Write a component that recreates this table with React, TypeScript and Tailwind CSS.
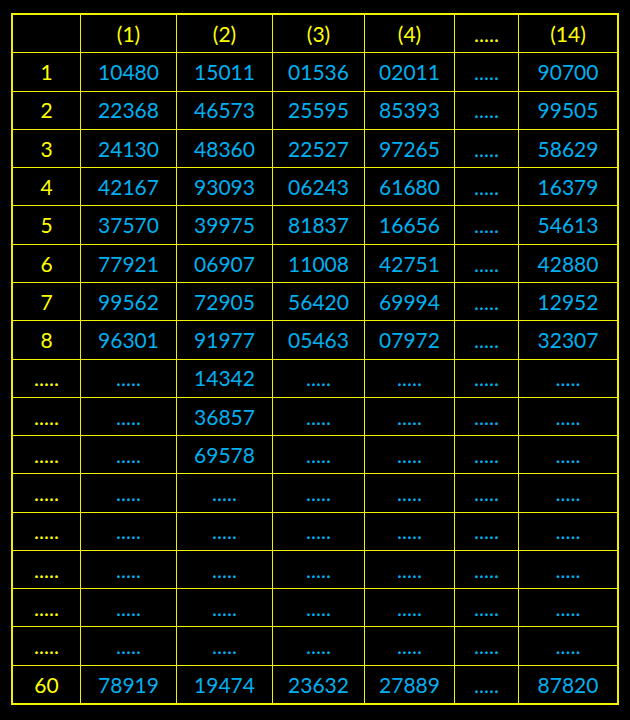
import React from "react";

const header = ["", "(1)", "(2)", "(3)", "(4)", ".....", "(14)"];
const D = ".....";
const rows: string[][] = [
  ["1", "10480", "15011", "01536", "02011", D, "90700"],
  ["2", "22368", "46573", "25595", "85393", D, "99505"],
  ["3", "24130", "48360", "22527", "97265", D, "58629"],
  ["4", "42167", "93093", "06243", "61680", D, "16379"],
  ["5", "37570", "39975", "81837", "16656", D, "54613"],
  ["6", "77921", "06907", "11008", "42751", D, "42880"],
  ["7", "99562", "72905", "56420", "69994", D, "12952"],
  ["8", "96301", "91977", "05463", "07972", D, "32307"],
  [D, D, "14342", D, D, D, D],
  [D, D, "36857", D, D, D, D],
  [D, D, "69578", D, D, D, D],
  [D, D, D, D, D, D, D],
  [D, D, D, D, D, D, D],
  [D, D, D, D, D, D, D],
  [D, D, D, D, D, D, D],
  [D, D, D, D, D, D, D],
  ["60", "78919", "19474", "23632", "27889", D, "87820"],
];

export default function App() {
  return (
    <div
      className="w-[630px] h-[720px] bg-black pl-[11px] pt-[13px]"
      style={{ fontFamily: "Lato, 'Noto Sans', sans-serif" }}
    >
      <div className="w-[608px] h-[692px] border-2 border-[#f0f000] bg-[#f0f000] grid grid-cols-[67px_95px_95px_91px_89px_63px_98px] grid-rows-[repeat(18,minmax(0,1fr))] gap-px">
        {header.map((h, i) => (
          <div
            key={"h" + i}
            className="bg-black flex items-center justify-center pt-[1px] text-[21px] text-[#ffff00]"
          >
            {h}
          </div>
        ))}
        {rows.map((r, ri) =>
          r.map((c, ci) => (
            <div
              key={ri + "-" + ci}
              className={
                "bg-black flex items-center justify-center text-[21px] " +
                (ci === 0 ? "text-[#ffff00]" : "text-[#00b0f0]")
              }
            >
              {c}
            </div>
          ))
        )}
      </div>
    </div>
  );
}
